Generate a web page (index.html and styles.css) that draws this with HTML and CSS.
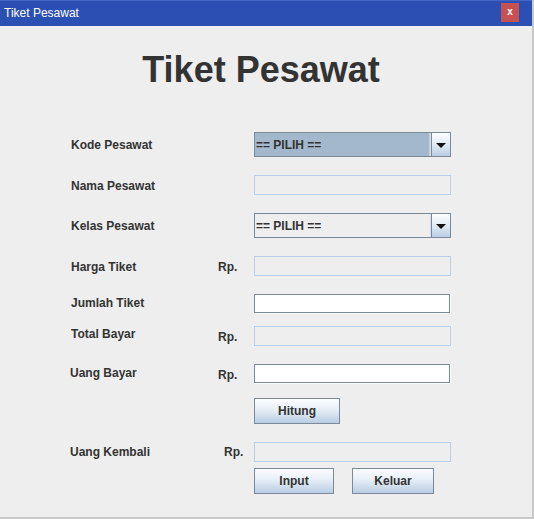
FILE: index.html
```html
<!DOCTYPE html>
<html lang="id">
<head>
<meta charset="utf-8">
<title>Tiket Pesawat</title>
<link rel="stylesheet" href="styles.css">
</head>
<body>
<div class="window">
  <div class="titlebar">
    <span class="title-text">Tiket Pesawat</span>
    <span class="close">x</span>
  </div>
  <div class="content">
    <h1 class="heading">Tiket Pesawat</h1>
    <div class="form">
      <div class="row">
        <span class="lbl off-6">Kode Pesawat</span>
        <span class="rp"></span>
        <div class="combo combo-selected">
          <span class="combo-text">== PILIH ==</span>
          <span class="combo-btn"><span class="arrow"></span></span>
        </div>
      </div>
      <div class="row gap-18">
        <span class="lbl off-4">Nama Pesawat</span>
        <span class="rp"></span>
        <div class="field field-readonly"></div>
      </div>
      <div class="row gap-18">
        <span class="lbl off-6">Kelas Pesawat</span>
        <span class="rp"></span>
        <div class="combo">
          <span class="combo-text">== PILIH ==</span>
          <span class="combo-btn"><span class="arrow"></span></span>
        </div>
      </div>
      <div class="row gap-18">
        <span class="lbl off-4">Harga Tiket</span>
        <span class="lbl off-4">Rp.</span>
        <div class="field field-readonly"></div>
      </div>
      <div class="row gap-18">
        <span class="lbl off-2">Jumlah Tiket</span>
        <span class="rp"></span>
        <div class="field field-edit"></div>
      </div>
      <div class="row gap-13">
        <span class="lbl off-1">Total Bayar</span>
        <span class="lbl off-4">Rp.</span>
        <div class="field field-readonly"></div>
      </div>
      <div class="row gap-18">
        <span class="lbl off-2 shift-left">Uang Bayar</span>
        <span class="lbl off-4">Rp.</span>
        <div class="field field-edit"></div>
      </div>
      <div class="actions gap-15">
        <button class="btn btn-hitung">Hitung</button>
      </div>
      <div class="row gap-18">
        <span class="lbl off-3 shift-left">Uang Kembali</span>
        <span class="lbl off-3 rp-indent">Rp.</span>
        <div class="field field-readonly"></div>
      </div>
      <div class="actions gap-6">
        <button class="btn btn-input">Input</button>
        <button class="btn btn-keluar">Keluar</button>
      </div>
    </div>
  </div>
</div>
</body>
</html>
```

FILE: styles.css
```css
html {
  background: #c9c9c9;
}

body {
  margin: 0;
  font-family: "Liberation Sans", Arial, sans-serif;
}

.window {
  width: 532px;
  height: 517px;
  background: #eeeeee;
}

.titlebar {
  height: 26px;
  box-sizing: border-box;
  background: #2c4fb3;
  border-top: 1px solid #4566c6;
  display: flex;
  align-items: flex-start;
  justify-content: space-between;
  padding: 0 13px 0 4px;
}

.title-text {
  color: #ffffff;
  font-size: 12px;
  line-height: 14px;
  margin-top: 5px;
}

.close {
  width: 18px;
  height: 19px;
  margin-top: 2px;
  background: #c75050;
  color: #ffffff;
  font-size: 10px;
  font-weight: bold;
  line-height: 18px;
  text-align: center;
}

.heading {
  margin: 24px 0 0;
  padding-right: 10px;
  font-size: 36px;
  line-height: 40px;
  font-weight: bold;
  color: #333333;
  text-align: center;
}

.form {
  margin-top: 42px;
  display: flex;
  flex-direction: column;
}

.row {
  display: grid;
  grid-template-columns: 147px 36px 197px;
  padding-left: 71px;
  align-items: start;
}

.gap-18 { margin-top: 18px; }
.gap-15 { margin-top: 15px; }
.gap-13 { margin-top: 13px; }
.gap-6 { margin-top: 6px; }

.lbl {
  font-size: 12px;
  line-height: 14px;
  font-weight: bold;
  color: #333333;
  white-space: nowrap;
}

.off-1 { padding-top: 1px; }
.off-2 { padding-top: 2px; }
.off-3 { padding-top: 3px; }
.off-4 { padding-top: 4px; }
.off-6 { padding-top: 6px; }

.shift-left { margin-left: -1px; }
.rp-indent { padding-left: 6px; }

.combo {
  height: 25px;
  box-sizing: border-box;
  border: 1px solid #7a8a99;
  display: flex;
  background: #eeeeee;
}

.combo-selected .combo-text {
  background: #a3b8cc;
  box-shadow: inset -1px 0 0 #c6d3df;
}

.combo-text {
  flex: 1;
  padding: 2px 0 0 1px;
  font-size: 12px;
  line-height: 21px;
  font-weight: bold;
  color: #333333;
}

.combo-btn {
  width: 19px;
  border-left: 1px solid #d3dde8;
  background: linear-gradient(to bottom, #fdfeff 0%, #e4edf6 45%, #b9cde3 100%);
  box-shadow: inset 1px 0 0 #7a8a99;
  display: flex;
  align-items: center;
  justify-content: center;
}

.arrow {
  width: 0;
  height: 0;
  border-left: 5px solid transparent;
  border-right: 5px solid transparent;
  border-top: 5px solid #111111;
  margin-top: 1px;
}

.field {
  box-sizing: border-box;
}

.field-readonly {
  width: 197px;
  height: 20px;
  border: 1px solid #b8cfe5;
  background: #eeeeee;
}

.field-edit {
  width: 196px;
  height: 19px;
  border: 1px solid #7a8a99;
  background: #ffffff;
  box-shadow: 1px 1px 0 #ffffff;
}

.actions {
  display: flex;
  gap: 18px;
  padding-left: 254px;
}

.btn {
  height: 26px;
  box-sizing: border-box;
  border: 1px solid #7a8a99;
  background: linear-gradient(to bottom, #fdfeff 0%, #e6eef7 45%, #b9cde3 100%);
  font-family: "Liberation Sans", Arial, sans-serif;
  font-size: 12px;
  font-weight: bold;
  color: #333333;
  padding: 0;
  margin: 0;
}

.btn-hitung { width: 86px; }
.btn-input { width: 80px; }
.btn-keluar { width: 82px; }
```
